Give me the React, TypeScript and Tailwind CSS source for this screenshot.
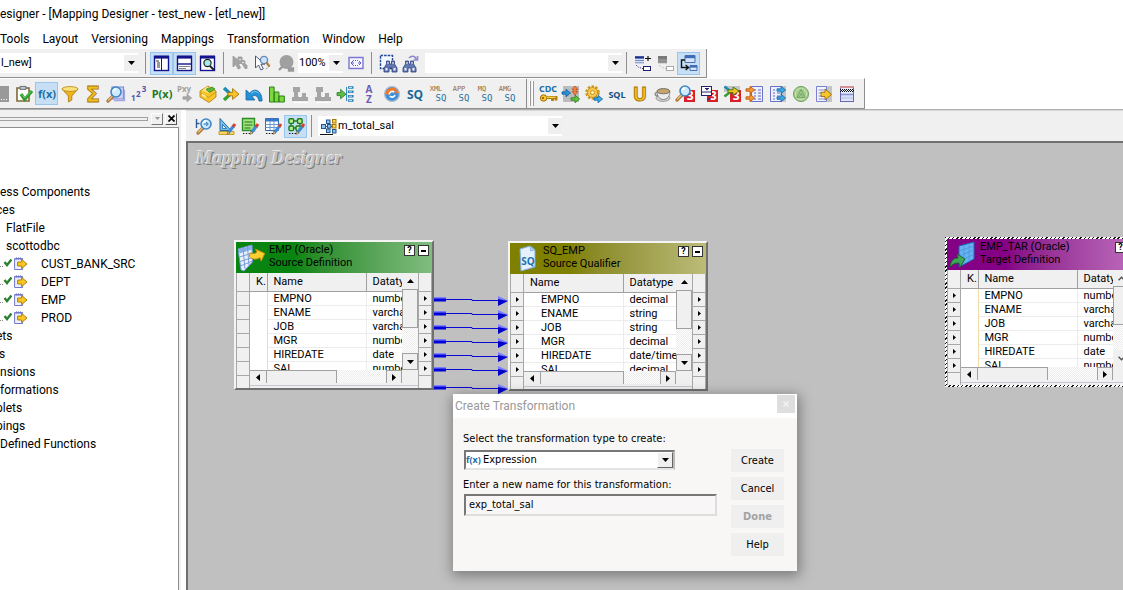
import { ReactNode } from "react";
import clsx from "clsx";

/* ---------- icons ---------- */

const Svg = ({ children }: { children: ReactNode }) => (
  <svg width="18" height="18" viewBox="0 0 18 18" fill="none" aria-hidden="true" className="shrink-0 overflow-visible">
    {children}
  </svg>
);

const Txt = ({ x, y, size, fill, children }: { x: number; y: number; size: number; fill: string; children: string }) => (
  <text x={x} y={y} fontSize={size} fill={fill} fontWeight="700" fontFamily="'Open Sans', sans-serif" textAnchor="middle">
    {children}
  </text>
);

const Lens = ({ x = 0, y = 0, children }: { x?: number; y?: number; children?: ReactNode }) => (
  <g transform={`translate(${x} ${y})`}>
    <path d="M1 16 L6 11" stroke="#b07a3c" strokeWidth="3.4" strokeLinecap="round" />
    <path d="M1.4 15.2 L5.4 11.2" stroke="#f0c890" strokeWidth="1.2" strokeLinecap="round" />
    <circle cx="9" cy="7" r="5" fill="#cfeaff" stroke="#3f86c4" strokeWidth="1.6" />
    <path d="M6.4 6.6 A3 3 0 0 1 9 4" stroke="#fff" strokeWidth="1.4" />
    {children}
  </g>
);

const RedThree = () => (
  <>
    <rect x="7" y="5" width="11" height="12" fill="#d8202a" />
    <Txt x={13.2} y={15.4} size={12} fill="#fff">3</Txt>
  </>
);

const Pencil = () => (
  <>
    <path d="M10.5 15.5 L16 8.5" stroke="#3c8ad8" strokeWidth="3" />
    <path d="M15 9.8 L17 7" stroke="#d8402c" strokeWidth="3" />
    <path d="M9 17.4 L9.8 14.2 L12 16 Z" fill="#e8c890" stroke="#604020" strokeWidth=".5" />
  </>
);

const Arrow = ({ x, y, c, s }: { x: number; y: number; c: string; s: string }) => (
  <path d={`M${x} ${y - 1.2} h4 v-2.6 l4.6 3.8 l-4.6 3.8 v-2.6 h-4 z`} fill={c} stroke={s} strokeWidth=".8" />
);

const Binoculars = () => (
  <>
    <path d="M5.5 6h3v3h2V6h3v3l2.5 4v4h-5v-4h-3v4H3v-4l2.500-4z" fill="#6478b0" stroke="#2c3f7c" strokeWidth=".8" />
    <path d="M4.500 13h2v2.500h-2zM12.500 13h2v2.500h-2zM6.500 7h1v2h-1zM11.500 7h1v2h-1z" fill="#eef2ff" />
  </>
);

const Bars = ({ c, s }: { c: string; s: string }) => (
  <>
    <path d="M1.5 2 h4.6 v5 h4.6 v4 h5.8 v6 h-15 z" fill={c} />
    <path d="M1.5 2 h4.6 v15 h-4.6 z M6.1 7 h4.8 v10 h-4.8 z M10.9 11 h5.4 v6 h-5.4 z" stroke={s} strokeWidth="1" />
  </>
);

const GrayBars = () => (
  <Svg>
    <path d="M2 2h7v5H7v4h4V8h4v4h2v4H1v-4h2V7H2z" fill="#a5a5a5" />
    <path d="M3 17.500h14M7.500 11.500h3" stroke="#fff" strokeWidth="1" />
  </Svg>
);

const Cursor = ({ c, s }: { c: string; s: string }) => (
  <path d="M1.5 2 v12 l3-3 l2.4 5 l2.4-1.2 l-2.4-4.6 h4 z" fill={c} stroke={s} strokeWidth="1" />
);

const Panes = ({ children }: { children: ReactNode }) => (
  <Svg>
    <rect x="1.5" y="2.5" width="14" height="14" fill="#fff" stroke="#14148c" strokeWidth="1.4" />
    <rect x="1" y="1.6" width="15" height="3" fill="#14148c" />
    {children}
  </Svg>
);

const Linked = ({ gray, children }: { gray?: boolean; children?: ReactNode }) => (
  <Svg>
    <rect x="1" y="2" width="9" height="7" fill={gray ? "#8c8c8c" : "#cfe0f8"} />
    <path d="M1 3.4h9" stroke={gray ? "#777" : "#20308c"} strokeWidth="2.4" />
    <path d="M1 6.5h9M1 8.8h9" stroke={gray ? "#999" : "#7a8cc8"} strokeWidth="1" />
    <path d="M2 11l2 2 6 2" stroke={gray ? "#aaa" : "#20206c"} strokeDasharray="1 1.4" />
    <rect x="9.5" y="12.5" width="7" height="4" fill="#fff" stroke={gray ? "#aaa" : "#20206c"} />
    {children}
  </Svg>
);

const StackSq = ({ top }: { top: string }) => (
  <svg width="22" height="18" viewBox="0 0 22 18" aria-hidden="true" className="shrink-0">
    <text x="9" y="6" fontSize="7" fill="#97682a" fontFamily="'DejaVu Sans Mono', monospace" textAnchor="middle">{top}</text>
    <text x="14" y="16" fontSize="9" fill="#25719c" fontFamily="'DejaVu Sans Mono', monospace" textAnchor="middle">SQ</text>
  </svg>
);

const Sheet = () => (
  <>
    <path d="M5.5 1.5 h11 v15 h-11 z" fill="#eef0ff" stroke="#6a74c8" />
    <path d="M8 5h2M12 5h3M8 8h2M12 8h3M8 11h2M12 11h3M8 14h2M12 14h3" stroke="#5d6bc0" strokeWidth="1.2" />
  </>
);

const FxIcon = () => <Svg><Txt x={9} y={13} size={11} fill="#1f6ea6">f(x)</Txt></Svg>;

const SourceIcon = () => (
  <svg width="14" height="14" viewBox="0 0 14 14" aria-hidden="true" className="shrink-0">
    <path d="M.6 1.5h8v11h-8z" fill="#eef0ff" stroke="#7078cc" />
    <path d="M1 2h7.5M2.5 .4v2M4.5 .4v2M6.5 .4v2" stroke="#7078cc" />
    <path d="M3.6 5h4V2.4L13 7l-5.4 4.6V9h-4z" fill="#f8c820" stroke="#a87808" strokeWidth=".9" />
  </svg>
);

const MappingIcon = () => (
  <svg width="17" height="17" viewBox="0 0 17 17" aria-hidden="true" className="shrink-0">
    <path d="M4 8.5h9M8.500 4v9" stroke="#305080" />
    <g stroke="#24588c" fill="#8cc4f0">
      <rect x="1.5" y="6.5" width="4" height="4" />
      <rect x="6.500" y="2" width="3.500" height="3.500" />
      <rect x="6.500" y="11" width="3.500" height="3.500" />
      <rect x="7.500" y="6.500" width="3.500" height="3.500" />
    </g>
    <g stroke="#a8780c" fill="#fcd848">
      <rect x="12.500" y="1.500" width="3.5" height="3.5" />
      <rect x="12.5" y="6.500" width="3.5" height="3.500" />
    </g>
    <rect x="12.500" y="11.500" width="3.5" height="3.500" stroke="#24588c" fill="#8cc4f0" />
    <path d="M0 16.500h13" stroke="#111" />
  </svg>
);

/* ---------- toolbar data ---------- */

interface Tool {
  label: string;
  icon: ReactNode;
  active?: boolean;
}

const transformationTools: Tool[] = [
  { label: "Validate", icon: <Svg><path d="M2 3h12v13H2z" fill="#fff" stroke="#7c6a34" strokeWidth="1.6" /><path d="M5 1.4h6v3H5z" fill="#b8c4e0" stroke="#555" strokeWidth=".8" /><path d="M6 9l3.6 5.4L17 6" stroke="#2f9a30" strokeWidth="3.2" /><path d="M6.6 9.4l3 3.6L16 6.4" stroke="#74d868" strokeWidth="1" /></Svg> },
  { label: "Expression", active: true, icon: <FxIcon /> },
  { label: "Filter", icon: <Svg><path d="M1 4l6.4 7v6l3.4-2v-4L17 4z" fill="#f0b420" stroke="#a87408" strokeWidth=".8" /><ellipse cx="9" cy="4" rx="8" ry="2.4" fill="#fce27c" stroke="#b48010" strokeWidth=".8" /></Svg> },
  { label: "Aggregator", icon: <Svg><text x="9" y="16.5" fontSize="21" fontWeight="700" fontFamily="'DejaVu Sans', sans-serif" textAnchor="middle" fill="#f4c020" stroke="#a87408" strokeWidth=".8">Σ</text></Svg> },
  { label: "Lookup", icon: <Svg><path d="M5 2h11.5v12H5z" fill="#cfd4f8" stroke="#7c84d0" strokeWidth="1.2" /><path d="M7 15.6h10.4V5" stroke="#a0a6e0" strokeWidth="1.4" /><Lens x={0} y={0} /></Svg> },
  { label: "Sequence Generator", icon: <Svg><Txt x={3.4} y={16.4} size={8} fill="#5555a8">1</Txt><Txt x={8.4} y={12} size={8} fill="#5555a8">2</Txt><Txt x={14} y={7} size={8} fill="#5555a8">3</Txt></Svg> },
  { label: "Stored Procedure", icon: <Svg><Txt x={9} y={13} size={11} fill="#1c7820">P(x)</Txt></Svg> },
  { label: "External Procedure", icon: <Svg><Txt x={8} y={7} size={8} fill="#a0a0a0">Pxy</Txt><Arrow x={7} y={13} c="#a8a8a8" s="#a0a0a0" /></Svg> },
  { label: "Router", icon: <Svg><path d="M9 1l8 5v6l-7 5.5L1 12V6z" fill="#f8c428" stroke="#b07c10" strokeWidth=".8" /><path d="M1.4 8l8.200 4.500 7-5.500" stroke="#c08c18" strokeWidth=".8" /><path d="M3 5.500L8 1.500l6 3-4.500 3.500z" fill="#fce888" /><path d="M7 4.500l3.600 3L16 4l-3-2-2.500 1.600L9.500 3z" fill="#5cb83c" stroke="#2c7818" strokeWidth=".7" /><path d="M3 9.500l4 2.500" stroke="#fff0a0" strokeWidth="1.6" /></Svg> },
  { label: "Union", icon: <Svg><path d="M2 3l6 5.4" stroke="#1c8cb4" strokeWidth="3.4" /><path d="M2 15l6-5.4" stroke="#38a030" strokeWidth="3.4" /><path d="M6 7.4h4.6V3.6L17 9.2l-6.4 5.2v-3.6H6z" fill="#f8c428" stroke="#a87408" strokeWidth=".9" /></Svg> },
  { label: "Joiner", icon: <Svg><path d="M1 5v10h9l-3-3.4c3-2.4 6-.6 7 4.4h3C17.400 6.400 10 1.600 4.600 8.200z" fill="#2490d8" stroke="#1464a0" strokeWidth=".8" /><path d="M6 8.600c3-3 6.400-2.400 8 0" stroke="#8cd0f8" strokeWidth="1" /></Svg> },
  { label: "Rank", icon: <Svg><Bars c="#7cd83c" s="#2c8018" /></Svg> },
  { label: "Normalizer", icon: <GrayBars /> },
  { label: "Update Strategy", icon: <GrayBars /> },
  { label: "Transaction Control", icon: <Svg><path d="M0 7.600h3.600V4.400L9 9.200l-5.400 4.600v-3.200H0z" fill="#5cc048" stroke="#287820" strokeWidth=".8" /><path d="M11 2.500h5.500M11 6.800h5.500M11 11.200h5.500M11 15.500h5.500" stroke="#2c80b4" strokeWidth="2.600" /><path d="M9.600 2v14" stroke="#2c80b4" /><path d="M12 2.500h3M12 6.800h3M12 11.200h3M12 15.500h3" stroke="#b4e0f8" strokeWidth="1" /></Svg> },
  { label: "Sorter", icon: <Svg><Txt x={9} y={7.500} size={10} fill="#6a5cb4">A</Txt><Txt x={9} y={17.500} size={10} fill="#6a5cb4">Z</Txt></Svg> },
  { label: "Custom", icon: <Svg><circle cx="9" cy="9" r="7.400" fill="#3c90e0" stroke="#b0bccc" strokeWidth="1.400" /><path d="M2.600 9a6.400 6.400 0 0 1 11.800-3.400L16 8l-5 .6 1.400-2C10 5.400 6.600 6.400 6 10z" fill="#f07828" /><path d="M6.200 9.400c.4-3 3-3.600 5-2.400M12 10c-1 2.600-3.600 2.600-5.200 1.200" stroke="#fff" strokeWidth="1.600" /></Svg> },
  { label: "Source Qualifier", icon: <Svg><Txt x={9} y={14} size={12} fill="#186898">SQ</Txt></Svg> },
  { label: "XML Source Qualifier", icon: <StackSq top="XML" /> },
  { label: "Application Source Qualifier", icon: <StackSq top="APP" /> },
  { label: "MQ Source Qualifier", icon: <StackSq top="MQ" /> },
  { label: "AMG Source Qualifier", icon: <StackSq top="AMG" /> },
];

const advancedTools: Tool[] = [
  { label: "CDC", icon: <Svg><Txt x={9} y={7} size={9} fill="#186ca8">CDC</Txt><circle cx="4.600" cy="13" r="3.200" fill="#f8c828" stroke="#a06c08" /><circle cx="4" cy="13" r="1" fill="#804c00" /><path d="M7.500 12.500h9.500v3M13.500 13v3" stroke="#b07c10" strokeWidth="2.800" /><path d="M7.500 12.300h9" stroke="#fcd850" strokeWidth="1.200" /></Svg> },
  { label: "Data Masking", icon: <Svg><rect x="1" y="1" width="16" height="16" fill="#bcbcbc" /><Arrow x={0} y={8} c="#2c90d8" s="#1460a0" /><Arrow x={9} y={14} c="#5cc838" s="#287818" /><path d="M13 1l3 3.400h-1.600v2.200H16l-3 3.400-3-3.400h1.600V4.400H10z" fill="#f08040" stroke="#b03c10" strokeWidth=".6" /></Svg> },
  { label: "Java", icon: <Svg><circle cx="7.500" cy="7.500" r="6" stroke="#d09a20" strokeWidth="2.600" strokeDasharray="2.400 1.400" /><circle cx="7.500" cy="7.500" r="5" fill="#f8cc50" stroke="#b88010" strokeWidth=".8" /><circle cx="7.500" cy="7.500" r="2" fill="#fff0b0" stroke="#b88010" strokeWidth=".8" /><Arrow x={9} y={14} c="#38a8e8" s="#1464a0" /></Svg> },
  { label: "SQL", icon: <Svg><Txt x={9} y={12.500} size={9} fill="#144c80">SQL</Txt></Svg> },
  { label: "Unstructured Data", icon: <Svg><text x="9" y="15.500" fontSize="19" fontWeight="700" fontFamily="'Open Sans', sans-serif" textAnchor="middle" fill="#f4c020" stroke="#a87408" strokeWidth=".9">U</text></Svg> },
  { label: "Java Transformation", icon: <Svg><ellipse cx="9" cy="13" rx="7" ry="3.400" fill="#d4d4d4" stroke="#8c8c8c" strokeWidth=".8" /><path d="M3 6.500c0 5 2.600 8 6.400 8s6.400-3 6.400-8z" fill="#ececec" stroke="#777" strokeWidth=".9" /><ellipse cx="9.400" cy="6.200" rx="6.400" ry="2.600" fill="#c8a468" stroke="#666" strokeWidth=".9" /><path d="M3.400 8c-3-1.400-3.600 3 1 3" stroke="#888" strokeWidth="1.200" /></Svg> },
  { label: "Lookup 3", icon: <Svg><RedThree /><Lens x={-1} y={-1} /></Svg> },
  { label: "Window 3", icon: <Svg><RedThree /><rect x="1.500" y="1.500" width="10" height="9" fill="#fff" stroke="#28206c" /><path d="M1.500 7h10M5 3.500h4" stroke="#28206c" /><path d="M5 3.500h4l-2 2z" fill="#28206c" /><path d="M7 14h4" stroke="#28206c" /></Svg> },
  { label: "Union 3", icon: <Svg><rect x="1" y="1" width="16" height="6" fill="#c4c4c4" /><RedThree /><path d="M1.500 1.500l5 4" stroke="#1c8cb4" strokeWidth="2.600" /><path d="M1.500 11.500l5-4" stroke="#38a030" strokeWidth="2.600" /><path d="M5 4.800h5V2l6 4-6 4.400V7.600H5z" fill="#f4c020" stroke="#387818" strokeWidth=".9" /></Svg> },
  { label: "Parse Document", icon: <Svg><Sheet /><Arrow x={0} y={5} c="#f89830" s="#b05008" /><Arrow x={0} y={13} c="#f89830" s="#b05008" /></Svg> },
  { label: "Generate Document", icon: <Svg><rect x="11" y="1" width="6" height="16" fill="#c4c4c4" /><g transform="translate(-4 0)"><Sheet /></g><Arrow x={8} y={5} c="#38a8e8" s="#1464a0" /><Arrow x={8} y={13} c="#38a8e8" s="#1464a0" /></Svg> },
  { label: "Identity", icon: <Svg><circle cx="9" cy="9" r="7.600" fill="#a4cc8c" stroke="#78a464" strokeWidth="1" /><circle cx="9" cy="9" r="5.600" stroke="#c8e4b4" strokeWidth="1" /><path d="M5 12.500L9 4.500l4 8z" stroke="#7cac6c" strokeWidth="1.200" /><path d="M7 12.500l2-4 2 4" stroke="#7cac6c" /></Svg> },
  { label: "Output", icon: <Svg><rect x="11" y="1" width="6" height="16" fill="#c4c4c4" /><path d="M1.500 1.500h10v15h-10z" fill="#f4f4ff" stroke="#7880d0" /><path d="M3.500 5h6M3.500 8h4M3.500 11h4M3.500 14h6" stroke="#888cc8" /><path d="M6 7.200h4V4l6.500 5.400L10 15v-3.400H6z" fill="#f8c828" stroke="#986808" strokeWidth=".9" /></Svg> },
  { label: "Report", icon: <Svg><rect x="2.500" y="2" width="13" height="14.500" fill="#e8ecff" stroke="#6468b0" /><path d="M2 2h14" stroke="#e08c88" strokeWidth="1.600" /><path d="M2 4.500h14M3 5.500h14M2 6.500h14" stroke="#111" strokeWidth="1" strokeDasharray="1 1" /><path d="M3 9.500h12" stroke="#8890d0" strokeWidth="1.600" /><path d="M3 13h12" stroke="#c8d0f4" strokeWidth="3" /></Svg> },
];

const viewTools: Tool[] = [
  { label: "Navigator", active: true, icon: <Panes><path d="M8.500 4v12" stroke="#14148c" /><path d="M3 7h3M4 9h3M4 11h3M4 13h3" stroke="#333" strokeWidth="1" /></Panes> },
  { label: "Output Window", active: true, icon: <Panes><path d="M1.500 10h14" stroke="#14148c" strokeWidth="1.400" /><path d="M3 12.500h11M3 14.500h7" stroke="#666" strokeWidth=".8" /></Panes> },
  { label: "Overview", icon: <Panes><circle cx="8.500" cy="9" r="3.600" fill="#a4ece8" stroke="#222" strokeWidth="1.200" /><path d="M11 12l4 4" stroke="#222" strokeWidth="2" /></Panes> },
];

const zoomTools: Tool[] = [
  { label: "Zoom Out", icon: <Svg><path d="M2 2v11l3-2.500 2 4.500 2.500-1-2-4.500H11l3 5h2v-3l-2-2V7l-3-1V3H7v3z" fill="#a4a4a4" stroke="#999" strokeWidth=".8" /><path d="M8 5.500h2M11 8.500h2" stroke="#e4e4e4" /></Svg> },
  { label: "Zoom In", icon: <Svg><Cursor c="#fff" s="#4c5870" /><circle cx="10" cy="6" r="3.600" fill="#c8e4fc" stroke="#6888b0" strokeWidth="1.400" /><path d="M12.500 8.500l3 4" stroke="#b88040" strokeWidth="2.400" /><path d="M12 15l4-3" stroke="#888" strokeWidth="1" strokeDasharray="1 1" /></Svg> },
  { label: "Zoom Percent", icon: <Svg><circle cx="9.500" cy="8" r="7" fill="#a0a0a0" /><path d="M2 16l4-4M12 14.500h4v2h-4z" stroke="#999" strokeWidth="2.400" /></Svg> },
];

const fitTools: Tool[] = [
  { label: "Fit", icon: <Svg><path d="M2 3.500h14v11H2z" fill="#f6f4ff" stroke="#7c78d0" strokeWidth="1.400" /><path d="M4 9h3M11 9h3M6 7L4 9l2 2M12 7l2 2-2 2" stroke="#6460c0" /><path d="M6 6.500h6M6 11.500h6" stroke="#6460c0" strokeDasharray="1 1" /></Svg> },
];

const findTools: Tool[] = [
  { label: "Find in Workspace", icon: <Svg><path d="M1.500 1.500h12v13h-12z" fill="#f4f8ff" stroke="#22489c" strokeWidth="1.400" strokeDasharray="2.600 1" /><g transform="translate(2 1)"><Binoculars /></g></Svg> },
  { label: "Find Next", icon: <Svg><g transform="translate(-2 1)"><Binoculars /></g><path d="M7 4c3-3 6-2 7 1M15.500 2v4h-4" stroke="#8c88d4" strokeWidth="1.600" /></Svg> },
];

const linkTools: Tool[] = [
  { label: "Autolink", icon: <Linked><path d="M11 4.500h6M14 2v5" stroke="#111" strokeWidth="1.200" /></Linked> },
  { label: "Link Columns", icon: <Linked gray /> },
  { label: "Propagate", active: true, icon: <Svg><path d="M5 1.500h10v7H5z" fill="#d4e4fc" stroke="#4870b0" /><path d="M5 3h10" stroke="#3c6cb8" strokeWidth="2.400" /><path d="M10 11.500h7v5h-7z" fill="#d4e4fc" stroke="#4870b0" /><path d="M10 12.600h7" stroke="#3c6cb8" strokeWidth="2" /><path d="M5 6H1.500v7.500H8M5.600 11l3 2.500-3 2.500" stroke="#111" strokeWidth="1.400" /></Svg> },
];

const designerTools: Tool[] = [
  { label: "Source Analyzer", icon: <Svg><path d="M1.500 2v9M1.500 6.500h3" stroke="#2c5c94" strokeWidth="1.400" /><Lens x={2} y={0}><path d="M6.500 7h4M9 5l2.400 2L9 9" stroke="#2470b4" strokeWidth="1" /></Lens></Svg> },
  { label: "Target Designer", icon: <Svg><path d="M2 1.500v12h11z" fill="#7cc0ec" stroke="#1c68a4" /><path d="M4.500 7.500v4h4z" fill="#efefef" stroke="#1c68a4" strokeWidth=".8" /><path d="M1 14.500h15v3H1z" fill="#f8d860" stroke="#b48c18" strokeWidth=".8" /><Pencil /></Svg> },
  { label: "Transformation Developer", icon: <Svg><path d="M1.500 1.500h12v12h-12z" fill="#a4e480" stroke="#2c8c24" strokeWidth="1.400" /><path d="M3.500 5h8M3.500 8h8M3.500 11h6" stroke="#206c18" /><path d="M2 16.500h8" stroke="#111" strokeDasharray="1.400 1.400" /><Pencil /></Svg> },
  { label: "Mapplet Designer", icon: <Svg><path d="M1.500 1.500h13v12h-13z" fill="#fff" stroke="#3868b0" /><path d="M1.500 3h13" stroke="#3878c8" strokeWidth="3" /><path d="M1.500 7.500h13M1.500 10.500h13M6 4v9M10 4v9" stroke="#6898d0" /><path d="M2 16.500h8" stroke="#111" strokeDasharray="1.400 1.400" /><Pencil /></Svg> },
  { label: "Mapping Designer", active: true, icon: <Svg><path d="M6 4h5M6 11h5M4 6v4M13 6v4" stroke="#1c7c20" strokeWidth="1.400" /><g fill="#b4f090" stroke="#1c7c20" strokeWidth="1.400"><rect x="2" y="1.800" width="4.600" height="4.600" rx="1" /><rect x="10.500" y="1.800" width="4.600" height="4.600" rx="1" /><rect x="2" y="9" width="4.600" height="4.600" rx="1" /><rect x="9" y="9" width="4.600" height="4.600" rx="1" /></g><path d="M2 16.500h8" stroke="#111" strokeDasharray="1.400 1.400" /><Pencil /></Svg> },
];

/* ---------- chrome pieces ---------- */

function Tools({ items }: { items: Tool[] }) {
  return (
    <>
      {items.map((t) => (
        <button
          key={t.label}
          type="button"
          aria-label={t.label}
          className={clsx(
            "flex h-[23px] w-[23px] shrink-0 items-center justify-center border",
            t.active ? "border-[#99c6ee] bg-[#c6dff5]" : "border-transparent"
          )}
        >
          {t.icon}
        </button>
      ))}
    </>
  );
}

const Separator = () => <div className="mx-1 h-[22px] w-px shrink-0 bg-[#8e8e8e]" />;

const Down = () => (
  <svg width="7" height="4" viewBox="0 0 7 4" aria-hidden="true">
    <path d="M0 0h7L3.500 4z" fill="#000" />
  </svg>
);

function Combo({ label, value, icon, className }: { label: string; value: string; icon?: ReactNode; className: string }) {
  return (
    <div className={clsx("relative flex h-5 shrink-0 items-center bg-white", className)}>
      {icon}
      <select aria-label={label} defaultValue={value} className="h-full min-w-0 flex-1 appearance-none bg-transparent pl-px outline-none">
        <option>{value}</option>
      </select>
      <span className="pointer-events-none absolute inset-y-0.5 right-0 flex w-3.5 items-center justify-center bg-[#efefef]">
        <Down />
      </span>
    </div>
  );
}

const menus = ["Tools", "Layout", "Versioning", "Mappings", "Transformation", "Window", "Help"];

/* ---------- navigator ---------- */

const tree = [
  { text: "ess Components", indent: "pl-0" },
  { text: "ces", indent: "-ml-1" },
  { text: "FlatFile", indent: "pl-1.5" },
  { text: "scottodbc", indent: "pl-1.5" },
  { text: "CUST_BANK_SRC", source: true },
  { text: "DEPT", source: true },
  { text: "EMP", source: true },
  { text: "PROD", source: true },
  { text: "ets", indent: "-ml-1" },
  { text: "s", indent: "-ml-px" },
  { text: "nsions", indent: "pl-0" },
  { text: "formations", indent: "pl-0" },
  { text: "plets", indent: "-ml-1" },
  { text: "pings", indent: "-ml-1" },
  { text: "Defined Functions", indent: "pl-0" },
];

function Navigator() {
  return (
    <aside className="flex w-[181px] shrink-0 flex-col bg-[#f0f0f0] pr-0.5">
      <div className="flex h-[17px] items-center gap-0.5 pr-0.5">
        <div className="mr-px h-1 flex-1 border-y border-r border-[#a0a0a0]" />
        <button type="button" aria-label="Panel menu" className="flex h-3 w-3 items-center justify-center border border-t-white border-l-white border-r-[#777] border-b-[#777]">
          <svg width="5" height="3" viewBox="0 0 5 3" aria-hidden="true"><path d="M0 0h5L2.500 3z" fill="#999" /></svg>
        </button>
        <button type="button" aria-label="Close panel" className="flex h-3 w-3 items-center justify-center border border-t-white border-l-white border-r-[#555] border-b-[#555]">
          <svg width="7" height="7" viewBox="0 0 7 7" aria-hidden="true"><path d="M.5 .5l6 6M6.500 .5l-6 6" stroke="#000" strokeWidth="1.700" /></svg>
        </button>
      </div>
      <ul className="flex-1 overflow-hidden border-t border-r border-[#8e8e8e] bg-white pt-[55px]">
        {tree.map((row) => (
          <li key={row.text} className={clsx("flex h-[18px] items-center whitespace-nowrap", row.indent)}>
            {row.source && (
              <span className="flex w-[41px] items-center gap-0.5">
                <svg width="12" height="14" viewBox="0 0 12 14" aria-hidden="true">
                  <path d="M0 9.500h4" stroke="#888" strokeDasharray="1 1" />
                  <path d="M4.500 5l2.500 3L11.500 2.500" stroke="#2c8030" strokeWidth="2.400" fill="none" />
                </svg>
                <SourceIcon />
              </span>
            )}
            {row.text}
          </li>
        ))}
      </ul>
    </aside>
  );
}

/* ---------- mapping objects ---------- */

interface ObjectProps {
  title: string;
  kind: string;
  icon: ReactNode;
  position: string;
  bar: string;
  rows: [string, string][];
  keyed?: boolean;
  inPorts?: boolean;
  selected?: boolean;
}

const Play = ({ flip }: { flip?: boolean }) => (
  <svg width="4" height="7" viewBox="0 0 4 7" aria-hidden="true" className="shrink-0">
    <path d={flip ? "M4 0v7L0 3.500z" : "M0 0v7l4-3.500z"} fill="#000" />
  </svg>
);

const Chevron = () => (
  <svg width="7" height="5" viewBox="0 0 7 5" aria-hidden="true">
    <path d="M.5 .8l3 3 3-3" fill="none" stroke="#555" strokeWidth="1.500" />
  </svg>
);

function Ports({ on }: { on?: boolean }) {
  return (
    <div className="w-[14px] shrink-0 border-x border-[#a8a8a8] bg-[#f0f0f0]">
      <div className="h-[18px]" />
      {[0, 1, 2, 3, 4, 5].map((i) => (
        <div key={i} className="flex h-[14px] items-center justify-center border-t border-[#a8a8a8]">
          {on && <svg width="3" height="5" viewBox="0 0 3 5" aria-hidden="true"><path d="M0 0v5l3-2.500z" fill="#000" /></svg>}
        </div>
      ))}
      <div className="border-t border-[#a8a8a8]" />
    </div>
  );
}

const checker = "bg-[repeating-conic-gradient(#ececec_0_25%,#ffffff_0_50%)] bg-[length:2px_2px]";

function MappingObject({ title, kind, icon, position, bar, rows, keyed, inPorts, selected }: ObjectProps) {
  return (
    <section
      className={clsx(
        "absolute flex w-[200px] flex-col font-['Roboto',sans-serif] text-[11px] leading-[13px] text-black",
        selected
          ? "bg-[repeating-linear-gradient(135deg,#111_0_1px,#fff_1px_3px)] p-0.5"
          : "border-2 border-t-[#f4f4f4] border-l-[#f4f4f4] border-r-[#707070] border-b-[#707070]",
        position
      )}
    >
      <header className={clsx("flex h-[31px] items-start gap-[3px] pl-0.5", bar)}>
        <span className="mt-0.5">{icon}</span>
        <h2 className="flex-1 pt-px">
          {title}
          <br />
          {kind}
        </h2>
        <div className="mt-[3px] mr-[3px] flex gap-[3px]">
          <button type="button" aria-label={`Help for ${title}`} className="flex h-[11px] w-[11px] items-center justify-center border border-[#333] bg-white text-[9px] leading-none font-bold">
            ?
          </button>
          <button type="button" aria-label={`Minimize ${title}`} className="flex h-[11px] w-[11px] items-center justify-center border border-[#333] bg-white">
            <span className="h-0.5 w-[5px] bg-black" />
          </button>
        </div>
      </header>
      <div className="flex h-[115px] bg-[#f0f0f0]">
        <Ports on={inPorts} />
        <div className="flex min-w-0 flex-1 flex-col">
          <div className="flex h-[97px]">
            <div className="min-w-0 flex-1 overflow-hidden bg-white">
              <table className="w-full table-fixed border-collapse text-left">
                <thead>
                  <tr className="h-[18px] bg-[#f0f0f0]">
                    {keyed && <th className="w-[17px] border-r border-b border-[#a0a0a0] pl-1.5 font-normal">K.</th>}
                    <th className="w-[99px] border-r border-b border-[#a0a0a0] pl-1.5 font-normal">Name</th>
                    <th className="overflow-hidden border-b border-[#a0a0a0] pl-1.5 font-normal whitespace-nowrap">Datatype</th>
                  </tr>
                </thead>
                <tbody>
                  {rows.map(([name, type]) => (
                    <tr key={name} className="h-[14px]">
                      {keyed && <td className="border-r border-[#f0dca8]" />}
                      <td className={clsx("border-r border-b border-[#ececec]", keyed ? "pl-1.5" : "pl-[17px]")}>{name}</td>
                      <td className="overflow-hidden border-b border-[#ececec] pl-1.5 whitespace-nowrap">{type}</td>
                    </tr>
                  ))}
                </tbody>
              </table>
            </div>
            <div className={clsx("flex w-4 shrink-0 flex-col", checker)}>
              <span className="flex h-4 items-center justify-center bg-[#f0f0f0]">
                <span className="rotate-180">{selected ? <Chevron /> : <Down />}</span>
              </span>
              <span className="h-[39px] border border-[#a0a0a0] bg-[#f0f0f0]" />
              <span className={clsx("mt-auto flex h-[17px] items-center justify-center bg-[#f0f0f0]", !selected && "border border-[#a0a0a0]")}>
                {selected ? <Chevron /> : <Down />}
              </span>
            </div>
          </div>
          <div className="flex h-[13px]">
            <div className={clsx("flex flex-1", checker)}>
              <span className="flex w-4 items-center justify-center border-t border-[#a0a0a0] bg-[#f0f0f0]"><Play flip /></span>
              <span className={clsx("border border-b-0 border-[#a0a0a0] bg-[#f0f0f0]", keyed ? "w-[71px]" : "w-[84px]")} />
              <span className="ml-auto flex w-4 items-center justify-center border border-b-0 border-[#a0a0a0] bg-[#f0f0f0]"><Play /></span>
            </div>
            <div className="w-4" />
          </div>
          <div className="mt-0.5 h-px bg-[#c4c8d0]" />
        </div>
        <Ports on />
      </div>
    </section>
  );
}

const oracleRows: [string, string][] = [
  ["EMPNO", "number"],
  ["ENAME", "varchar2"],
  ["JOB", "varchar2"],
  ["MGR", "number"],
  ["HIREDATE", "date"],
  ["SAL", "number"],
];

const qualifierRows: [string, string][] = [
  ["EMPNO", "decimal"],
  ["ENAME", "string"],
  ["JOB", "string"],
  ["MGR", "decimal"],
  ["HIREDATE", "date/time"],
  ["SAL", "decimal"],
];

const TableArrow = () => (
  <svg width="28" height="28" viewBox="0 0 28 28" fill="none" aria-hidden="true">
    <path d="M0 5l14-4 .5 17L6 27l-3-1z" fill="#e8f0fc" stroke="#6c90d0" />
    <path d="M.5 5.500l13.500-4 .2 4L1.500 9.500z" fill="#88b0e8" />
    <path d="M1.500 13l13-4M2 17.500l12.500-4M2.500 22l12-5M5 4l2 21M9.500 2.500l1.500 19" stroke="#7c9cd8" />
    <path d="M12 9c3 1 6 .6 7-1l-1.600-3 9.400 4.400-3.600 7.600-1.400-3.400c-3 2.400-8 2-10.400-1z" fill="#fcd030" stroke="#c08c10" />
  </svg>
);

const SqDocument = () => (
  <svg width="28" height="28" viewBox="0 0 28 28" aria-hidden="true">
    <path d="M8 4l10-3 5 4v17L9 26z" fill="#e4f0fc" stroke="#7cacdc" />
    <path d="M18 1l.6 5L23 5z" fill="#a8ccf0" stroke="#7cacdc" strokeWidth=".7" />
    <text x="16" y="20" fontSize="10" fontWeight="700" fontFamily="'Open Sans', sans-serif" fill="#1c70b0" textAnchor="middle">SQ</text>
  </svg>
);

const TargetArrow = () => (
  <svg width="28" height="28" viewBox="0 0 28 28" fill="none" aria-hidden="true">
    <path d="M10 5l15-4v17l-15 8z" fill="#68b0f0" stroke="#1c64b0" />
    <path d="M10 10l15-5M10 15l15-6M10 20l15-6.500M15 4v19M20 2.500v18" stroke="#4c9ce0" />
    <path d="M1 26c1-6 3-9 8-9l-1-4 8 5-5 8-1-4c-4-.4-6 1-9 4z" fill="#3ca858" stroke="#186830" />
  </svg>
);

// link start heights; the last one runs along the bottom edge of both objects
const links = [156, 170, 184, 198, 212, 226, 244];

function Links() {
  return (
    <svg width="76" height="260" viewBox="0 0 76 260" fill="none" aria-hidden="true" className="absolute top-0 left-[245px]">
      {links.map((y) => (
        <g key={y}>
          <path d={`M1 ${y - 1}h12`} stroke="#7c80ff" strokeWidth="2" />
          <path d={`M1 ${y + 1}h12`} stroke="#0000d8" strokeWidth="3" />
          <path d={`M13 ${y + 0.5}h26v1h30`} stroke="#0808d8" />
          <path d={`M65 ${y - 3}l10 4.500-10 5z`} fill="#7c80ff" />
          <path d={`M65 ${y}l10 2-10 5z`} fill="#0404c8" />
        </g>
      ))}
    </svg>
  );
}

/* ---------- dialog ---------- */

const actionClass = "flex h-[23px] w-[53px] items-center justify-center bg-[#efefef]";

function CreateDialog() {
  return (
    <div role="dialog" aria-labelledby="dlg-title" className="absolute top-[251px] left-[265px] w-[344px] bg-[#f8f7f6] pb-[15px] font-['DejaVu_Sans_Condensed','Open_Sans',sans-serif] text-[11px] leading-[14px] text-black shadow-[1px_3px_12px_2px_rgba(0,0,0,0.35)]">
      <div className="flex h-6 items-start justify-between bg-white pr-0.5 pl-0.5">
        <h2 id="dlg-title" className="pt-1 font-['Roboto',sans-serif] text-[12px] leading-4 text-[#999]">Create Transformation</h2>
        <button type="button" aria-label="Close" className="mt-px flex h-[18px] w-[18px] items-center justify-center bg-[#dedede]">
          <svg width="6" height="6" viewBox="0 0 6 6" aria-hidden="true"><path d="M.5 .5l5 5M5.500 .5l-5 5" stroke="#f4f4f4" strokeWidth="1.400" /></svg>
        </button>
      </div>
      <form className="flex items-start justify-between pt-3.5 pr-[13px] pl-2.5" onSubmit={(e) => e.preventDefault()}>
        <div className="flex w-[254px] flex-col">
          <label htmlFor="type">Select the transformation type to create:</label>
          <div className="relative mt-1 ml-px flex h-5 w-[211px] items-center border-2 border-t-[#777] border-l-[#777] border-r-[#bbb] border-b-[#e4e4e4] bg-white">
            <span className="flex w-[17px] shrink-0 items-center font-['Open_Sans',sans-serif] text-[9px] font-bold text-[#1f6ea6]">f(x)</span>
            <select id="type" defaultValue="Expression" className="h-4 min-w-0 flex-1 appearance-none bg-transparent outline-none">
              <option>Expression</option>
            </select>
            <span className="pointer-events-none absolute inset-y-0 right-0 flex w-4 items-center justify-center border border-t-white border-l-white border-r-[#666] border-b-[#666] bg-[#f0f0f0]">
              <Down />
            </span>
          </div>
          <label htmlFor="name" className="mt-2">Enter a new name for this transformation:</label>
          <input id="name" type="text" defaultValue="exp_total_sal" className="mt-0.5 ml-px h-[22px] border-2 border-t-[#777] border-l-[#777] border-r-[#ddd] border-b-[#ddd] bg-[#f8f6f6] pb-0.5 pl-[3px] outline-none" />
        </div>
        <div className="flex flex-col gap-[5px] pt-[17px]">
          <button type="submit" className={actionClass}>Create</button>
          <button type="button" className={actionClass}>Cancel</button>
          <button type="button" disabled className={clsx(actionClass, "font-bold text-[#a3a3a3]")}>Done</button>
          <button type="button" className={actionClass}>Help</button>
        </div>
      </form>
    </div>
  );
}

/* ---------- page ---------- */

export default function App() {
  return (
    <div className="flex min-h-screen flex-col overflow-hidden bg-white font-['Roboto',sans-serif] text-[12px] leading-4 text-black">
      <h1 className="h-7 pt-1.5 whitespace-nowrap">esigner - [Mapping Designer - test_new - [etl_new]]</h1>
      <nav className="flex h-[21px] items-center gap-[13px]">
        {menus.map((m) => (
          <button key={m} type="button">{m}</button>
        ))}
      </nav>

      <div className="flex h-[29px] w-fit items-center border-r border-b border-[#8e8e8e] bg-[#f0f0f0] pr-1.5 text-[11px]">
        <Combo label="Folder" value="l_new]" className="mr-[3px] w-[138px]" />
        <Separator />
        <Tools items={viewTools} />
        <Separator />
        <Tools items={zoomTools} />
        <Combo label="Zoom" value="100%" className="mx-px w-[45px]" />
        <Tools items={fitTools} />
        <Separator />
        <Tools items={findTools} />
        <Combo label="Search" value="" className="ml-[3px] w-[197px]" />
        <Separator />
        <Tools items={linkTools} />
      </div>

      <div className="flex h-[31px] w-fit items-center border-t border-r border-b border-t-white border-r-[#8e8e8e] border-b-[#8e8e8e] bg-[#f0f0f0] pr-1.5">
        <button type="button" aria-label="Sources" className="flex h-[23px] w-3 shrink-0 items-center overflow-hidden">
          <svg width="9" height="16" viewBox="0 0 9 16" aria-hidden="true">
            <path d="M0 0h9v16H0z" fill="#999" />
            <path d="M1 13.500h7" stroke="#fff" strokeDasharray="1 1.500" />
          </svg>
        </button>
        <Tools items={transformationTools} />
        <div className="ml-2 h-[29px] w-px bg-[#8e8e8e]" />
        <div className="mr-0.5 ml-0.5 flex h-[25px] gap-px">
          <span className="w-0.5 border-r border-l border-r-[#999] border-l-white" />
          <span className="w-0.5 border-r border-l border-r-[#999] border-l-white" />
        </div>
        <Tools items={advancedTools} />
      </div>

      <div className="flex flex-1 border-t border-[#b0b0b0]">
        <Navigator />
        <main className="ml-[5px] flex min-w-0 flex-1 flex-col">
          <div className="flex h-[31px] items-center border-t border-[#d8d8d8] bg-[#f0f0f0] pl-1.5 text-[11px]">
            <Tools items={designerTools} />
            <Separator />
            <Combo label="Mapping" value="m_total_sal" icon={<span className="pl-0.5"><MappingIcon /></span>} className="ml-0.5 w-[244px]" />
          </div>
          <div className="relative flex-1 overflow-hidden border-t-2 border-l-2 border-t-[#707070] border-l-[#707070] bg-[#c0c0c0]">
            <p className="pt-1 pl-2 font-['Liberation_Serif',serif] text-[19px] leading-[22px] font-bold text-[#c0c0c0] italic [text-shadow:-1px_-1px_0_#e8e8e8,1px_1px_0_#7c7c7c]">
              Mapping Designer
            </p>
            <MappingObject title="EMP (Oracle)" kind="Source Definition" icon={<TableArrow />} position="top-[97px] left-[46px]" bar="bg-linear-to-r from-[#0a8410] from-30% to-[#80bc80]" rows={oracleRows} keyed />
            <MappingObject title="SQ_EMP" kind="Source Qualifier" icon={<SqDocument />} position="top-[98px] left-[320px]" bar="bg-linear-to-r from-[#808000] from-30% to-[#bcbc78]" rows={qualifierRows} inPorts />
            <MappingObject title="EMP_TAR (Oracle)" kind="Target Definition" icon={<TargetArrow />} position="top-[94px] left-[757px]" bar="bg-linear-to-r from-[#840084] from-30% to-[#c070c0]" rows={oracleRows} keyed inPorts selected />
            <Links />
            <CreateDialog />
          </div>
        </main>
      </div>
    </div>
  );
}
